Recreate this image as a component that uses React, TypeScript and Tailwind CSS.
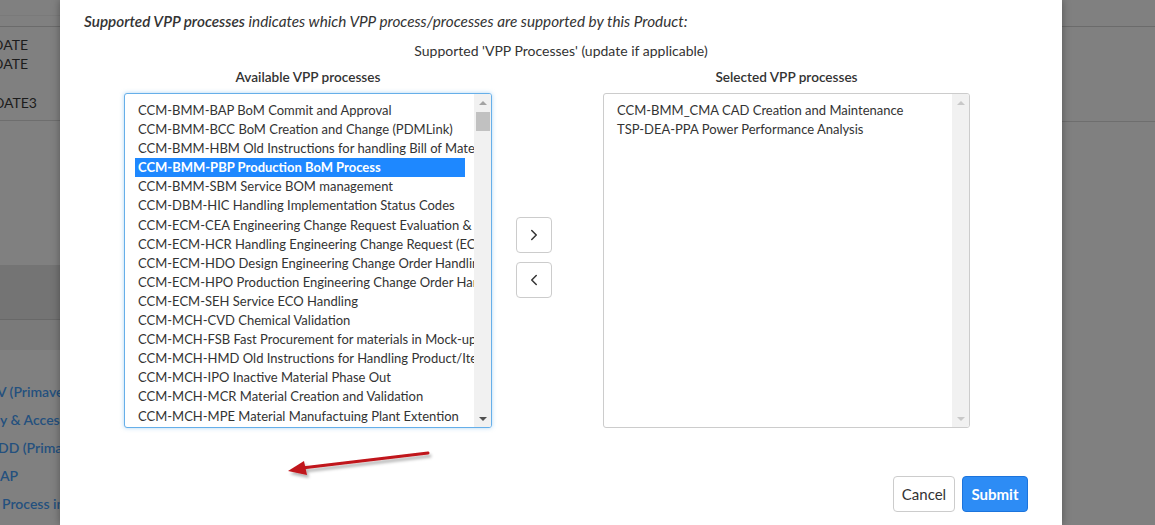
import { ChevronLeft, ChevronRight } from 'lucide-react'

const available = [
  'CCM-BMM-BAP BoM Commit and Approval',
  'CCM-BMM-BCC BoM Creation and Change (PDMLink)',
  'CCM-BMM-HBM Old Instructions for handling Bill of Material',
  'CCM-BMM-PBP Production BoM Process',
  'CCM-BMM-SBM Service BOM management',
  'CCM-DBM-HIC Handling Implementation Status Codes',
  'CCM-ECM-CEA Engineering Change Request Evaluation & Approval',
  'CCM-ECM-HCR Handling Engineering Change Request (ECR)',
  'CCM-ECM-HDO Design Engineering Change Order Handling',
  'CCM-ECM-HPO Production Engineering Change Order Handling',
  'CCM-ECM-SEH Service ECO Handling',
  'CCM-MCH-CVD Chemical Validation',
  'CCM-MCH-FSB Fast Procurement for materials in Mock-up',
  'CCM-MCH-HMD Old Instructions for Handling Product/Item Data',
  'CCM-MCH-IPO Inactive Material Phase Out',
  'CCM-MCH-MCR Material Creation and Validation',
  'CCM-MCH-MPE Material Manufactuing Plant Extention',
]

const selected = ['CCM-BMM_CMA CAD Creation and Maintenance', 'TSP-DEA-PPA Power Performance Analysis']

const font = 'font-["Lato","Liberation_Sans",sans-serif]'

function Scrollbar({ thumb }: { thumb?: boolean }) {
  return (
    <div className="flex w-[17px] shrink-0 flex-col items-center bg-[#f1f1f1]">
      <div className="flex h-[17px] w-full items-center justify-center">
        <div className={`h-0 w-0 border-x-[4px] border-b-[4px] border-x-transparent ${thumb ? 'border-b-[#a3a3a3]' : 'border-b-[#c8c8c8]'}`} />
      </div>
      {thumb && <div className="mt-[1px] h-[19px] w-[14px] bg-[#c1c1c1]" />}
      <div className="flex-1" />
      <div className="flex h-[17px] w-full items-center justify-center">
        <div className={`h-0 w-0 border-x-[4px] border-t-[4px] border-x-transparent ${thumb ? 'border-t-[#505050]' : 'border-t-[#c8c8c8]'}`} />
      </div>
    </div>
  )
}

function ListBox({ items, focused, active, thumb }: { items: string[]; focused?: boolean; active?: number; thumb?: boolean }) {
  return (
    <div
      className={`flex h-[335px] w-full overflow-hidden rounded-[3px] border bg-white ${
        focused ? 'border-[#66afe9] shadow-[0_0_4px_rgba(102,175,233,0.5)]' : 'border-[#cccccc]'
      }`}
    >
      <div className="min-w-0 flex-1 overflow-hidden pl-[10px] pt-[7px]">
        {items.map((item, i) => (
          <div
            key={item}
            className={`mr-[9px] whitespace-nowrap pl-[3px] text-[13px] leading-[19.1px] ${
              i === active ? 'bg-[#1e88ff] font-bold text-white' : 'text-[#333333]'
            }`}
          >
            {item}
          </div>
        ))}
      </div>
      <Scrollbar thumb={thumb} />
    </div>
  )
}

function LeftBackdrop() {
  return (
    <div className="flex w-[60px] shrink-0 flex-col overflow-hidden text-[14px] leading-[19px] text-[#1c1c1c]">
      <div className="h-[16px] border-b border-[#7a7a7a]" />
      <div className="h-[11px] border-b border-[#6b6b6b]" />
      <div className="flex h-[94px] flex-col border-b border-[#6e6e6e] pt-[8px]">
        <div className="flex w-[28px] justify-end whitespace-nowrap">UPDATE</div>
        <div className="flex w-[28px] justify-end whitespace-nowrap">UPDATE</div>
        <div className="mt-[20px] flex w-[37px] justify-end whitespace-nowrap">UPDATE3</div>
      </div>
      <div className="h-[144px]" />
      <div className="h-[55px] border-b border-[#686868] bg-[#747474]" />
      <div className="h-[30px] bg-[#7a7a7a]" />
      <div className="flex flex-col gap-[9px] pt-[32px] font-semibold text-[#24507e]">
        <div className="-ml-[3px] whitespace-nowrap">V (Primavera)</div>
        <div className="whitespace-nowrap">y &amp; Accessibility</div>
        <div className="-ml-[2px] whitespace-nowrap">DD (Primavera)</div>
        <div className="whitespace-nowrap">AP</div>
        <div className="ml-[2px] whitespace-nowrap">Process in</div>
      </div>
    </div>
  )
}

function RightBackdrop() {
  return (
    <div className="flex flex-1 flex-col">
      <div className="h-[27px] border-b border-[#6b6b6b]" />
      <div className="h-[95px] border-b border-[#6e6e6e]" />
    </div>
  )
}

export default function App() {
  return (
    <div className={`relative flex h-[525px] w-[1155px] overflow-hidden bg-[#808080] ${font}`}>
      <LeftBackdrop />

      <div className="relative z-10 flex w-[1002px] shrink-0 flex-col bg-white px-6 shadow-[0_0_8px_rgba(0,0,0,0.35)]">
        <p className="mt-[11px] text-[15.3px] leading-[20px] text-[#333333] italic">
          <span className="font-semibold">Supported VPP processes</span> indicates which VPP process/processes are supported by this Product:
        </p>
        <p className="mt-[10px] text-center text-[14px] leading-[20px] text-[#333333]">
          Supported 'VPP Processes' (update if applicable)
        </p>

        <div className="mt-[6px] ml-[40px] flex items-start">
          <div className="flex w-[368px] flex-col">
            <h3 className="mb-[6px] text-center text-[13.6px] leading-[20px] font-semibold text-[#333333]">Available VPP processes</h3>
            <ListBox items={available} focused active={3} thumb />
          </div>

          <div className="ml-[24px] mt-[150px] flex flex-col gap-[9px]">
            <button className="flex h-[36px] w-[36px] items-center justify-center rounded-[4px] border border-[#cccccc] bg-white text-[#333333]">
              <ChevronRight size={18} strokeWidth={2} />
            </button>
            <button className="flex h-[36px] w-[36px] items-center justify-center rounded-[4px] border border-[#cccccc] bg-white text-[#333333]">
              <ChevronLeft size={18} strokeWidth={2} />
            </button>
          </div>

          <div className="ml-[51px] flex w-[367px] flex-col">
            <h3 className="mb-[6px] text-center text-[13.6px] leading-[20px] font-semibold text-[#333333]">Selected VPP processes</h3>
            <ListBox items={selected} />
          </div>
        </div>

        <div className="mt-[48px] flex justify-end gap-[7px] pr-[10px]">
          <button className="h-[36px] w-[62px] rounded-[4px] border border-[#cccccc] bg-white text-[15px] text-[#333333]">Cancel</button>
          <button className="h-[36px] w-[66px] rounded-[4px] border border-[#1c74dc] bg-[#2d8cf5] text-[15px] font-bold text-white">Submit</button>
        </div>
      </div>

      <RightBackdrop />

      <svg className="pointer-events-none absolute left-[280px] top-[444px] z-20" width="160" height="36" viewBox="0 0 160 36">
        <defs>
          <filter id="sh" x="-20%" y="-50%" width="140%" height="200%">
            <feDropShadow dx="2" dy="3" stdDeviation="1.5" floodColor="#000" floodOpacity="0.3" />
          </filter>
        </defs>
        <g filter="url(#sh)">
          <line x1="148" y1="9" x2="22" y2="24" stroke="#c0141a" strokeWidth="3" strokeLinecap="round" />
          <polygon points="8,27 24,17 27,31" fill="#c0141a" />
        </g>
      </svg>
    </div>
  )
}
